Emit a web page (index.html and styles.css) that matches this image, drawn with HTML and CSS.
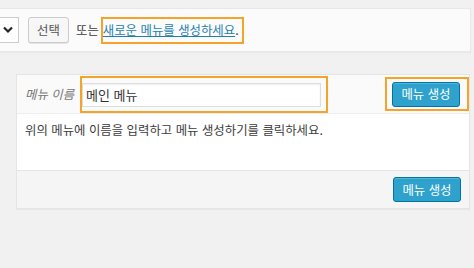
FILE: index.html
```html
<!DOCTYPE html>
<html lang="ko">
<head>
    <meta charset="UTF-8">
    <meta name="viewport" content="width=device-width, initial-scale=1.0">
    <title>메뉴</title>
    <link rel="stylesheet" href="styles.css">
</head>
<body>
    <div class="menu-select">
        <div class="select-box">
            <svg class="chevron" width="10" height="8" viewBox="0 0 10 8"><path d="M1 1.5 L5 5.5 L9 1.5" fill="none" stroke="#222" stroke-width="2.2"/></svg>
        </div>
        <button class="btn-plain">선택</button>
        <span class="or-text">또는</span>
        <span class="highlight link-box"><a href="#" class="create-link">새로운 메뉴를 생성하세요</a>.</span>
    </div>

    <div class="menu-panel">
        <div class="panel-header">
            <label class="name-label" for="menuName">메뉴 이름</label>
            <span class="highlight input-box">
                <input type="text" id="menuName" value="메인 메뉴">
            </span>
            <span class="highlight btn-box">
                <button class="btn-primary">메뉴 생성</button>
            </span>
        </div>
        <div class="panel-body">
            <p>위의 메뉴에 이름을 입력하고 메뉴 생성하기를 클릭하세요.</p>
        </div>
        <div class="panel-footer">
            <button class="btn-primary">메뉴 생성</button>
        </div>
    </div>
</body>
</html>
```

FILE: styles.css
```css
* {
    margin: 0;
    padding: 0;
    box-sizing: border-box;
}

body {
    font-family: "Noto Sans CJK KR", "Noto Sans", sans-serif;
    font-size: 12.4px;
    color: #3c3c3c;
    background-color: #f1f1f1;
    width: 474px;
    height: 268px;
    overflow: hidden;
}

.menu-select {
    display: flex;
    align-items: center;
    height: 44px;
    margin: 8px 3px 0 -14px;
    padding-left: 1px;
    background-color: #fbfbfb;
    border: 1px solid #e8e8e8;
    box-shadow: 0 1px 1px rgba(0, 0, 0, 0.03);
}

.select-box {
    width: 31px;
    height: 26px;
    border: 1px solid #ccc;
    background-color: #fff;
    display: flex;
    align-items: center;
    justify-content: flex-end;
    padding-right: 5px;
}

.btn-plain {
    margin-left: 9px;
    width: 41px;
    height: 26px;
    font-family: inherit;
    font-size: 12.4px;
    color: #555;
    background-color: #f7f7f7;
    border: 1px solid #ccc;
    border-radius: 3px;
    box-shadow: 0 1px 0 #e4e4e4;
}

.or-text {
    margin-left: 7px;
}

.highlight {
    border: 2px solid #f5a32a;
}

.link-box {
    margin-left: 2px;
    height: 27px;
    display: flex;
    align-items: center;
    padding: 0 3px 0 0;
}

.create-link {
    color: #1f7fb0;
    text-decoration: underline;
}

.menu-panel {
    margin: 22px 4px 0 16px;
    background-color: #fff;
    border: 1px solid #e5e5e5;
    box-shadow: 0 1px 1px rgba(0, 0, 0, 0.04);
}

.panel-header {
    display: flex;
    align-items: center;
    height: 39px;
    padding: 0 0 0 8px;
    background-color: #fafafa;
    border-bottom: 1px solid #eee;
}

.name-label {
    font-style: italic;
    color: #777;
    width: 55px;
}

.input-box {
    width: 248px;
    height: 37px;
    display: flex;
    align-items: center;
    padding: 4px 5px 3px 0;
}

.input-box input {
    width: 100%;
    height: 24px;
    padding: 0 3px;
    font-family: inherit;
    font-size: 13px;
    color: #333;
    background-color: #fff;
    border: 1px solid #ddd;
    box-shadow: inset 0 1px 2px rgba(0, 0, 0, 0.07);
    outline: none;
}

.btn-box {
    margin-left: auto;
    width: 84px;
    height: 34px;
    display: flex;
    align-items: center;
    padding-left: 5px;
}

.btn-primary {
    width: 68px;
    height: 25px;
    font-family: inherit;
    font-size: 12.4px;
    color: #fff;
    background-color: #2ea2cc;
    border: 1px solid #0074a2;
    border-radius: 3px;
    box-shadow: inset 0 1px 0 rgba(120, 200, 230, 0.5);
}

.panel-body {
    height: 56px;
    padding: 7px 8px;
    background-color: #fff;
}

.panel-footer {
    display: flex;
    justify-content: flex-end;
    align-items: center;
    height: 38px;
    padding-right: 8px;
    background-color: #f5f5f5;
    border-top: 1px solid #e5e5e5;
}
```
